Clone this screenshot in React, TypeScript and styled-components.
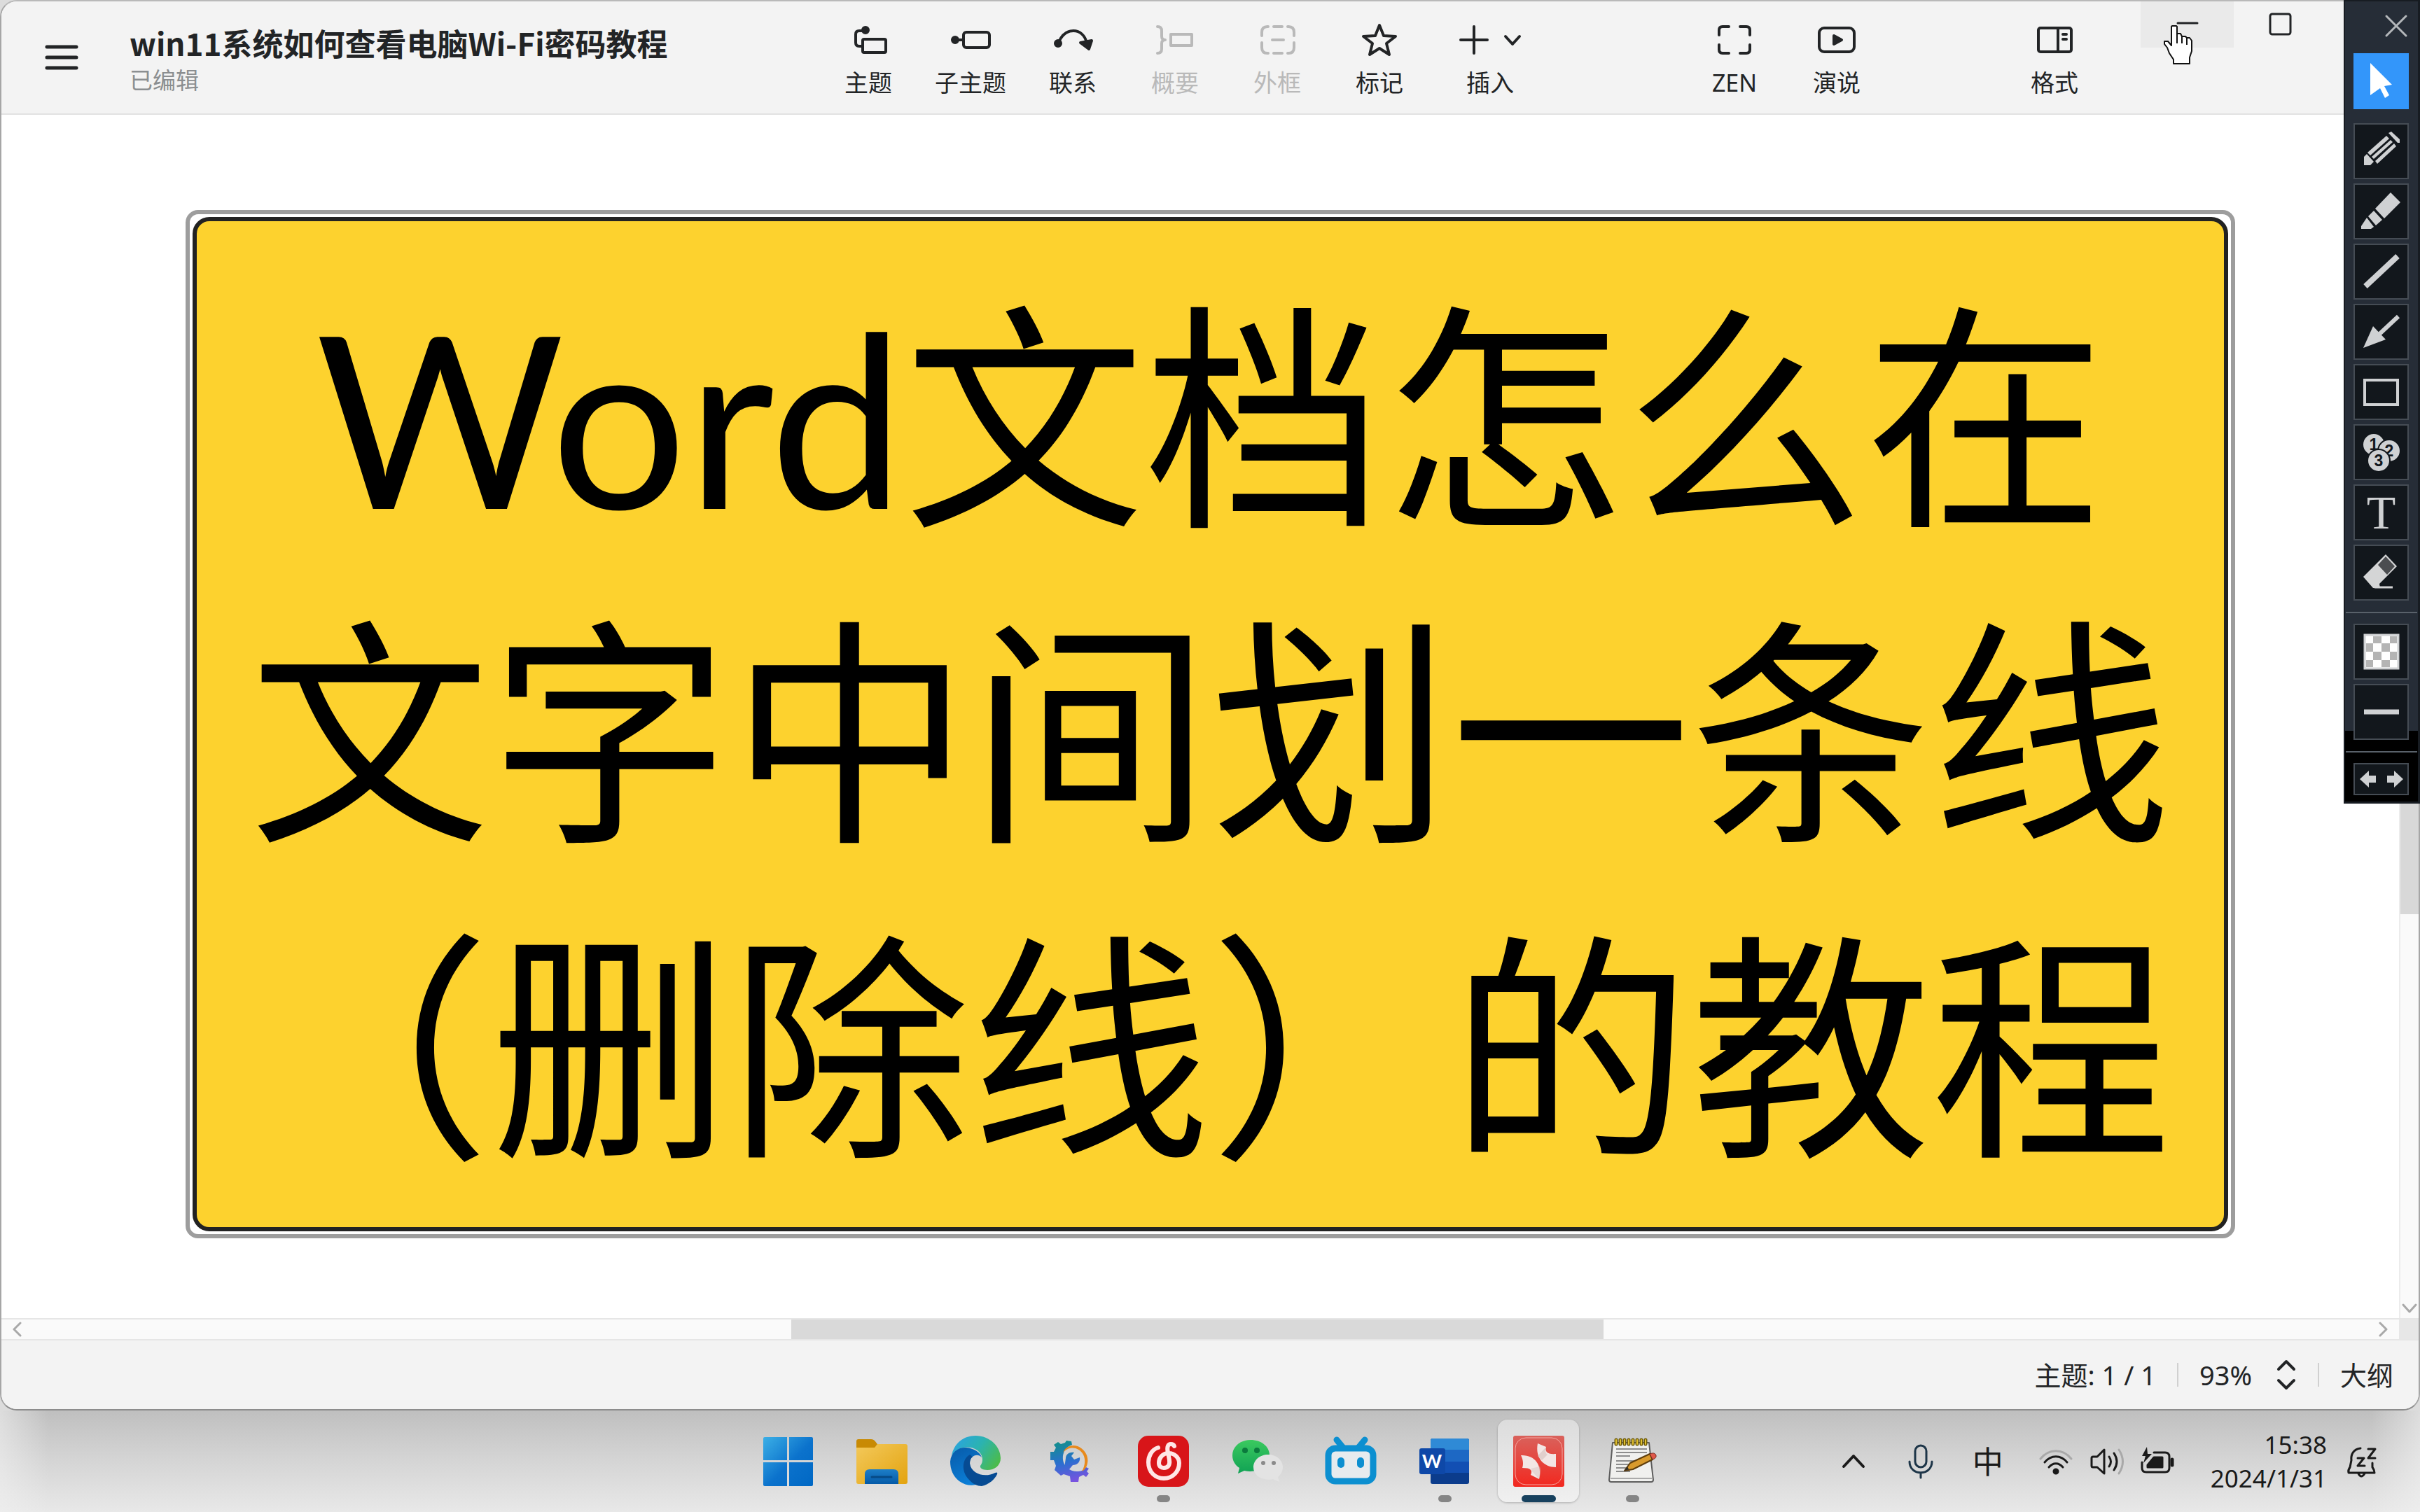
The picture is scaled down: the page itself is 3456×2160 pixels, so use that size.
import React from "react";
import styled, { createGlobalStyle, css } from "styled-components";

const GlobalStyle = createGlobalStyle`
  *, *::before, *::after { box-sizing: border-box; }
  body {
    margin: 0;
    background: #dcdcdc;
    color: #222426;
    font-family: "Noto Sans", "Noto Sans CJK SC", sans-serif;
  }
  button {
    margin: 0;
    padding: 0;
    border: 0;
    background: none;
    color: inherit;
    font: inherit;
  }
  svg { display: block; flex: none; }
`;

const Desktop = styled.div`
  position: relative;
  display: flex;
  flex-direction: column;
  min-height: 100vh;
`;

const AppWindow = styled.main`
  flex: 1;
  display: flex;
  flex-direction: column;
  overflow: hidden;
  border: 2px solid #a6a6a6;
  border-top-color: #b9b9b9;
  border-bottom-color: #8c8c8c;
  border-radius: 24px;
  background: #fff;
`;

/* ---------- header ---------- */

const Header = styled.header`
  display: flex;
  height: 162px;
  margin-right: -2px;
  border-bottom: 2px solid #e2e2e2;
  background: #f3f3f3;
`;

const TitleArea = styled.div`
  flex: 1;
  display: flex;
  padding-left: 56px;
`;

const MenuButton = styled.button`
  align-self: flex-start;
  margin: 50px 67px 0 0;
`;

const TitleText = styled.div`
  padding-top: 29px;
`;

const DocTitle = styled.h1`
  margin: 0;
  font-family: "Noto Sans CJK SC", sans-serif;
  font-size: 44px;
  line-height: 60px;
  font-weight: 700;
  white-space: nowrap;
`;

const DocState = styled.p`
  margin: 0;
  font-size: 33px;
  line-height: 48px;
  color: #8b8e90;
`;

const ToolGroup = styled.nav<{ $after?: number }>`
  display: flex;
  margin-right: ${(p) => p.$after ?? 0}px;
`;

const Tool = styled.button<{ $wide?: boolean }>`
  display: flex;
  flex-direction: column;
  align-items: center;
  gap: 7px;
  width: ${(p) => (p.$wide ? 170 : 146)}px;
  padding-top: 25px;
  font-size: 34px;
  line-height: 48px;
  &:disabled { color: #b9b9b9; }
`;

const CaptionButton = styled.button<{ $hover?: boolean }>`
  display: flex;
  justify-content: center;
  align-items: center;
  width: 133px;
  height: 66px;
  background: ${(p) => (p.$hover ? "#eaeaea" : "transparent")};
`;

const HandPointer = styled.svg`
  position: absolute;
  top: 34px;
  right: 324px;
`;

/* ---------- canvas ---------- */

const CanvasRow = styled.section`
  flex: 1;
  display: flex;
`;

const Canvas = styled.div`
  flex: 1;
  display: flex;
  align-items: center;
  padding: 22px 234px 0 263px;
`;

const TopicFrame = styled.div`
  flex: 1;
  padding: 4px;
  border: 6px solid #9d9d9d;
  border-radius: 18px;
`;

const Topic = styled.h2`
  margin: 0;
  padding: 53px 0 34px;
  border: 6px solid #222;
  border-radius: 24px;
  background: #fdd22e;
  color: #000;
  font-family: Lato, "Noto Sans CJK SC", sans-serif;
  font-size: 343px;
  line-height: 450px;
  font-weight: 400;
  text-align: center;
`;

const TopicLine = styled.span`
  display: block;
  white-space: nowrap;
`;

const VScroll = styled.div`
  display: flex;
  flex-direction: column;
  width: 28px;
  border-left: 2px solid #ececec;
  background: #fafafa;
`;

const VThumb = styled.div`
  height: 1142px;
  background: #d8d8d8;
`;

const ScrollArrow = styled.button<{ $push?: "down" | "right" }>`
  display: flex;
  justify-content: center;
  align-items: center;
  width: ${(p) => (p.$push === "down" ? 26 : 46)}px;
  height: 28px;
  ${(p) => p.$push === "down" && css`margin-top: auto;`}
  ${(p) => p.$push === "right" && css`margin-left: auto;`}
`;

const HScrollRow = styled.div`
  display: flex;
  height: 32px;
  border-top: 2px solid #e6e6e6;
  border-bottom: 2px solid #e6e6e6;
  background: #fafafa;
`;

const HTrack = styled.div`
  flex: 1;
  display: flex;
`;

const HSpace = styled.div`
  width: 1082px;
`;

const HThumb = styled.div`
  width: 1160px;
  background: #d9d9d9;
`;

const ScrollCorner = styled.div`
  width: 28px;
  background: #e7e7e7;
`;

const StatusBar = styled.footer`
  display: flex;
  justify-content: flex-end;
  align-items: center;
  height: 98px;
  padding-right: 36px;
  background: #f3f3f3;
  font-size: 38px;
  line-height: 56px;
  white-space: nowrap;
`;

const Separator = styled.span`
  width: 2px;
  height: 34px;
  margin: 0 30px;
  background: #d0d0d0;
`;

const Zoom = styled.span`
  display: flex;
  align-items: center;
  gap: 34px;
`;

const ZoomSteps = styled.span`
  display: grid;
  gap: 10px;
`;

/* ---------- annotation palette ---------- */

const Palette = styled.aside`
  position: absolute;
  top: 0;
  right: 0;
  width: 109px;
  padding: 18px 14px 9px 12px;
  border: solid #171c22;
  border-width: 2px 3px 3px 2px;
  background: linear-gradient(#262d37 1042px, #000 1042px);
  color: #cfd1d3;
`;

const PaletteClose = styled.button`
  display: block;
  margin: 0 0 22px auto;
`;

const PaletteStack = styled.div`
  display: grid;
  gap: 6px;
`;

const PaletteButton = styled.button<{ $active?: boolean; $short?: boolean }>`
  display: flex;
  justify-content: center;
  align-items: center;
  width: 79px;
  height: ${(p) => (p.$short ? 46 : 80)}px;
  margin-bottom: ${(p) => (p.$active ? 14 : 0)}px;
  border: 2px solid ${(p) => (p.$active ? "#3396fa" : "#454c54")};
  background: ${(p) => (p.$active ? "#3396fa" : "#12171c")};
`;

const LetterMark = styled.span`
  font-family: "Liberation Serif", serif;
  font-size: 68px;
  line-height: 76px;
`;

const PaletteRule = styled.hr`
  margin: 16px -13px 15px -11px;
  border: 0;
  border-top: 2px solid #59616a;
`;

/* ---------- taskbar ---------- */

const Taskbar = styled.footer`
  display: grid;
  grid-template-columns: 1fr auto 1fr;
  height: 145px;
  background:
    linear-gradient(90deg, rgba(240, 240, 240, 0.6), transparent 2%, transparent 98%, rgba(240, 240, 240, 0.6)),
    linear-gradient(#bfbfbf, #d3d3d3 45%, #e8e8e8);
`;

const Apps = styled.nav`
  grid-column: 2;
  display: flex;
  gap: 18px;
  padding: 13px 9px 0;
`;

const AppButton = styled.button<{ $active?: boolean }>`
  display: flex;
  flex-direction: column;
  align-items: center;
  justify-content: space-between;
  width: 116px;
  height: 118px;
  padding-top: 22px;
  border-radius: 14px;
  ${(p) => p.$active && css`
    background: linear-gradient(#dcdcdc, #f0f0f0);
    box-shadow: 0 1px 3px rgba(0, 0, 0, 0.25);
  `}
`;

const RunMark = styled.span<{ $active?: boolean }>`
  width: ${(p) => (p.$active ? 49 : 19)}px;
  height: 10px;
  border-radius: 5px;
  background: ${(p) => (p.$active ? "#17415e" : "#858585")};
`;

const Tray = styled.div`
  display: flex;
  justify-content: flex-end;
  align-items: center;
  padding-right: 55px;
  color: #1a1a1a;
`;

const TrayButton = styled.button<{ $narrow?: boolean; $lead?: boolean }>`
  display: flex;
  justify-content: center;
  width: ${(p) => (p.$narrow ? 73 : 96)}px;
  margin-left: ${(p) => (p.$lead ? 13 : 0)}px;
  font-size: 44px;
  line-height: 56px;
`;

const Clock = styled.time`
  margin: 0 22px 0 38px;
  font-size: 35px;
  line-height: 48px;
  text-align: right;
`;

/* ---------- small drawing helpers ---------- */

const Line = ({ w = 60, h = 60, sw = 4, children }: { w?: number; h?: number; sw?: number; children: React.ReactNode }) => (
  <svg width={w} height={h} viewBox={`0 0 ${w} ${h}`} fill="none" stroke="currentColor" strokeWidth={sw} strokeLinecap="round" strokeLinejoin="round" aria-hidden="true">
    {children}
  </svg>
);

const editTools = [
  { label: "主题", icon: <><circle cx="26" cy="16" r="4" fill="currentColor" /><path d="M26 17H17q-5 0-5 5V34q0 5 5 5H22" /><rect x="22" y="29" width="33" height="19" rx="2" /></> },
  { label: "子主题", icon: <><circle cx="8" cy="30" r="4" fill="currentColor" /><path d="M8 30H20" /><rect x="20" y="19" width="37" height="22" rx="4" /></> },
  { label: "联系", icon: <><circle cx="9" cy="35" r="4" fill="currentColor" /><path d="M10 33C15 22 22 17 31 17s16 6 19 17" /><path d="M41 34L57 31L53 43Z" fill="currentColor" /></> },
  { label: "概要", off: true, icon: <><path d="M5 11q6 0 6 6v8q0 5 5 5q-5 0-5 5v8q0 6-6 6" /><rect x="24" y="22" width="30" height="16" /></> },
  { label: "外框", off: true, icon: <><path d="M8 24V19q0-8 8-8h1M25 11H37M45 11h1q8 0 8 8v5M54 34v7q0 8-8 8h-1M37 49H25M17 49h-1q-8 0-8-8v-7M23 30H39" /></> },
  { label: "标记", icon: <path d="M30 9L36 24L53 25L40 35L44 51L30 42L16 51L20 35L7 25L24 24Z" /> },
];

const paletteTools = [
  { label: "铅笔", icon: <g fill="currentColor"><path d="M5 38L9 34L19 45L14 50H5Z" /><path d="M10 32L37 8L41 12L14 36Z" /><path d="M16 38L43 14L46 17L19 41Z" /><path d="M21 44L48 19L51 23L24 48Z" /><path d="M40 4L44 2L56 13V18H53Z" /></g> },
  { label: "荧光笔", icon: <g fill="currentColor"><path d="M21 26L43 3L57 17L34 40Z" /><path d="M11 37L19 29L31 42L22 50Z" /><path d="M1 51L9 39L19 52L15 55H1Z" /></g> },
  { label: "直线", icon: <path d="M7 51L53 8" stroke="currentColor" strokeWidth="8" /> },
  { label: "箭头", icon: <><path d="M24 36L54 8" stroke="currentColor" strokeWidth="6" /><path d="M4 53L18 22L36 41Z" fill="currentColor" /></> },
  { label: "矩形", icon: <rect x="6" y="13" width="47" height="35" fill="none" stroke="currentColor" strokeWidth="4" /> },
];

const Coin = ({ x, y, n }: { x: number; y: number; n: string }) => (
  <>
    <circle cx={x} cy={y} r="16" fill="#cfd1d3" stroke="#12171c" strokeWidth="2" />
    <text x={x} y={y + 8} textAnchor="middle" fontFamily="Liberation Sans, sans-serif" fontWeight="700" fontSize="23" fill="#12171c">{n}</text>
  </>
);

const Art = ({ children }: { children: React.ReactNode }) => (
  <svg width="60" height="60" viewBox="0 0 60 60" aria-hidden="true">{children}</svg>
);

const AppArt = ({ children }: { children: React.ReactNode }) => (
  <svg width="74" height="74" viewBox="0 0 74 74" fill="none" aria-hidden="true">{children}</svg>
);

const apps = [
  {
    label: "开始",
    icon: <>
      <defs><linearGradient id="win" gradientUnits="userSpaceOnUse" x1="2" y1="2" x2="72" y2="72"><stop stopColor="#3cb0e6" /><stop offset="0.55" stopColor="#0b72cc" /><stop offset="1" stopColor="#0068c4" /></linearGradient></defs>
      <path fill="url(#win)" d="M4 3H36V36H2V5q0-2 2-2ZM39 3H71q2 0 2 2V36H39ZM2 39H36V73H4q-2 0-2-2ZM39 39H73V71q0 2-2 2H39Z" />
    </>,
  },
  {
    label: "文件资源管理器",
    icon: <>
      <defs>
        <linearGradient id="fold" x1="0" y1="0" x2="1" y2="1"><stop stopColor="#f3c95b" /><stop offset="1" stopColor="#e3a30f" /></linearGradient>
        <linearGradient id="foldBlue" x1="0" y1="0" x2="0" y2="1"><stop stopColor="#1d7ec7" /><stop offset="1" stopColor="#045aa8" /></linearGradient>
      </defs>
      <path fill="url(#fold)" d="M1 16H28L31 13H71q3 0 3 3V67q0 3-3 3H4q-3 0-3-3Z" />
      <path fill="#c88a04" d="M1 9q0-3 3-3H22q3 0 5 2l4 5l-4 5H1Z" />
      <path fill="url(#foldBlue)" d="M13 70V56q0-7 7-7H54q7 0 7 7V70Z" />
      <path stroke="#064a86" strokeWidth="3" strokeLinecap="round" d="M23 60H51" />
    </>,
  },
  {
    label: "Edge",
    icon: <>
      <defs>
        <linearGradient id="edgeTop" x1="0" y1="0.2" x2="1" y2="0.7"><stop stopColor="#2aa3e0" /><stop offset="0.5" stopColor="#2bb3b0" /><stop offset="1" stopColor="#4cbb4a" /></linearGradient>
        <linearGradient id="edgeMid" x1="0" y1="0" x2="0.5" y2="1"><stop stopColor="#075aa8" /><stop offset="1" stopColor="#0b7fd8" /></linearGradient>
      </defs>
      <path fill="url(#edgeTop)" d="M3 30C6 12 20 1 37 1C58 1 73 17 73 33C73 44 64 50 54 50C47 50 43 47 44 44C49 38 48 28 40 22C28 14 10 17 3 30Z" />
      <path fill="url(#edgeMid)" d="M1 38C2 24 13 17 24 18C35 19 44 25 46 32C40 25 29 30 29 40C29 52 40 60 52 58C46 73 28 76 14 66C5 59 1 49 1 38Z" />
      <path fill="#064b93" d="M29 28C17 35 17 53 28 64C33 70 40 73 46 73C56 71 65 63 68 56C69 53 67 53 65 54C50 62 31 55 29 41C29 37 30 33 33 31Z" />
    </>,
  },
  {
    label: "电脑管家",
    icon: <>
      <defs><linearGradient id="gear" gradientUnits="userSpaceOnUse" x1="30" y1="8" x2="44" y2="67"><stop stopColor="#128f8d" /><stop offset="0.5" stopColor="#2b6fcf" /><stop offset="1" stopColor="#7a52e0" /></linearGradient></defs>
      <path fill="url(#gear)" d="M10 24H15L18 18L15 14L21 10L25 13L31 11L33 8L40 9L41 14C32 17 27 25 28 35C29 45 38 52 48 52C53 52 57 51 61 46L65 48L62 52L65 55L61 60L57 57L51 60L50 67H39L38 59L29 56L25 58L16 50L18 44L15 36H10Z" />
      <path fill="#e88a1c" d="M28 25C32 16 41 13 49 16C59 20 65 30 63 40C62 46 59 50 55 52C59 45 61 36 57 28C51 17 37 15 28 25Z" />
      <path fill="url(#gear)" d="M32 33C32 28 37 24 44 25L40 30L44 35L52 32C53 38 49 43 42 43L37 49L30 47Z" />
    </>,
  },
  {
    label: "网易云音乐", run: true,
    icon: <>
      <rect x="1" y="1" width="73" height="73" rx="15" fill="#d81519" />
      <path stroke="#ffe6e6" strokeWidth="6" strokeLinecap="round" d="M30 18C20 21 16 31 16 39C16 53 26 62 38 62C51 62 60 52 60 40C60 32 53 26 45 26C36 26 31 33 31 40C31 45 34 47 38 47C44 47 47 43 46 36L44 25C42 17 44 13 48 13Q52 13 53 16" />
    </>,
  },
  {
    label: "微信",
    icon: <>
      <defs><linearGradient id="wx" x1="0" y1="0" x2="0" y2="1"><stop stopColor="#3bc95f" /><stop offset="1" stopColor="#10a254" /></linearGradient></defs>
      <path fill="url(#wx)" d="M28 7C13 7 2 17 2 29C2 37 6 43 12 47L10 55L19 51C36 55 55 46 55 29C55 16 43 7 28 7Z" />
      <circle cx="20" cy="22" r="4" fill="#0b7a3d" /><circle cx="37" cy="22" r="4" fill="#0b7a3d" />
      <path fill="#e3e3e3" d="M53 28C41 28 32 36 32 46C32 58 44 66 60 63L69 67L67 60C71 57 74 51 74 46C74 36 65 28 53 28Z" />
      <circle cx="46" cy="40" r="3" fill="#8b8b8b" /><circle cx="61" cy="40" r="3" fill="#8b8b8b" />
    </>,
  },
  {
    label: "哔哩哔哩",
    icon: <>
      <path stroke="#0c8fd0" strokeWidth="9" strokeLinecap="round" d="M17 7L26 18M57 7L48 18" />
      <rect x="5" y="19" width="64" height="47" rx="10" fill="#e6ebee" stroke="#0c8fd0" strokeWidth="9" />
      <rect x="18" y="32" width="10" height="15" rx="5" fill="#0c8fd0" /><rect x="46" y="32" width="10" height="15" rx="5" fill="#0c8fd0" />
    </>,
  },
  {
    label: "Word", run: true,
    icon: <>
      <rect x="17" y="5" width="55" height="65" rx="3" fill="#0b3c8c" />
      <path fill="#2f8ad6" d="M20 5H69q3 0 3 3V21H17V8q0-3 3-3Z" /><path fill="#1d68c4" d="M17 21H72V38H17Z" /><path fill="#124fb3" d="M17 38H72V54H17Z" />
      <rect x="1" y="19" width="37" height="37" rx="3" fill="#0e48a8" />
      <text x="19" y="47" textAnchor="middle" fontFamily="Lato, sans-serif" fontWeight="700" fontSize="27" fill="#fff">W</text>
    </>,
  },
  {
    label: "Xmind", run: true, active: true,
    icon: <>
      <defs><linearGradient id="xm" x1="0" y1="0" x2="0" y2="1"><stop stopColor="#d9625c" /><stop offset="1" stopColor="#f2281f" /></linearGradient></defs>
      <rect x="1" y="1" width="73" height="73" rx="3" fill="url(#xm)" />
      <rect x="4" y="4" width="67" height="67" rx="15" stroke="#f5a8a2" strokeWidth="1" />
      <path fill="#f3e6e4" d="M36 12L48 17C46 24 50 28 62 27V46C45 46 32 33 36 12Z" />
      <path fill="#f3e6e4" d="M12 29C31 28 43 42 38 63L26 57C29 50 26 47 14 47C16 41 15 35 12 29Z" />
      <path fill="#d9c4c2" d="M36 30L48 17C46 22 47 26 50 28L42 36Z" opacity="0.7" />
      <path fill="#d9c4c2" d="M39 45C41 50 40 56 38 63L28 52C28 50 27 49 26 48Z" opacity="0.5" />
    </>,
  },
  {
    label: "记事本", run: true,
    icon: <>
      <path fill="#f0f0ee" stroke="#5d5d5d" strokeWidth="2" strokeLinejoin="round" d="M9 11H61L67 64Q67 67 64 67H7Q4 67 4 64Z" />
      <path stroke="#aaa" strokeWidth="2" d="M6 62H65" />
      <path stroke="#8d8d8d" strokeWidth="2" d="M14 20H58M14 25H58M14 30H34M14 37H52M14 42H44M14 47H38M14 52H34" />
      <path stroke="#6e5b08" strokeWidth="5" strokeLinecap="round" d="M14 7V13M20 7V13M26 7V13M32 7V13M38 7V13M44 7V13M50 7V13M56 7V13" />
      <path stroke="#e0bf2f" strokeWidth="2" strokeLinecap="round" d="M14 7V13M20 7V13M26 7V13M32 7V13M38 7V13M44 7V13M50 7V13M56 7V13" />
      <path fill="#d99a2c" stroke="#5e3d0c" strokeWidth="2" strokeLinejoin="round" d="M26 51L34 40L62 27L66 35L38 49Z" />
      <path fill="#e0584a" stroke="#7c2a20" strokeWidth="1" d="M62 27Q69 24 71 29Q72 33 66 35Z" />
      <path fill="#2b2b2b" d="M26 51L30 45L32 49Z" />
    </>,
  },
];

export default function App() {
  return (
    <Desktop>
      <GlobalStyle />
      <AppWindow>
        <Header>
          <TitleArea>
            <MenuButton aria-label="菜单">
              <Line sw={5}><path d="M9 15H51M9 30H51M9 45H51" /></Line>
            </MenuButton>
            <TitleText>
              <DocTitle>win11系统如何查看电脑Wi-Fi密码教程</DocTitle>
              <DocState>已编辑</DocState>
            </TitleText>
          </TitleArea>
          <ToolGroup $after={191} aria-label="编辑">
            {editTools.map((t) => (
              <Tool key={t.label} disabled={t.off}>
                <Line>{t.icon}</Line>
                {t.label}
              </Tool>
            ))}
            <Tool $wide>
              <Line w={90}><path d="M22 11V49M3 30H41M67 25L77 36L87 25" /></Line>
              插入
            </Tool>
          </ToolGroup>
          <ToolGroup $after={165} aria-label="视图">
            <Tool>
              <Line><path d="M8 23V16q0-5 5-5H22M38 11H47q5 0 5 5V23M52 37V44q0 5-5 5H38M22 49H13q-5 0-5-5V37" /></Line>
              ZEN
            </Tool>
            <Tool>
              <Line><rect x="5" y="13" width="50" height="34" rx="7" /><path d="M26 24L37 30L26 36Z" fill="currentColor" /></Line>
              演说
            </Tool>
          </ToolGroup>
          <ToolGroup $after={50} aria-label="格式">
            <Tool>
              <Line><rect x="7" y="13" width="47" height="34" rx="3" /><path d="M35 13V47M42 22H47M42 29H47" /></Line>
              格式
            </Tool>
          </ToolGroup>
          <CaptionButton $hover aria-label="最小化">
            <Line w={32} h={32} sw={3}><path d="M2 14H30" /></Line>
          </CaptionButton>
          <CaptionButton aria-label="最大化">
            <Line w={34} h={34} sw={3}><rect x="2" y="2" width="29" height="29" rx="3" /></Line>
          </CaptionButton>
          <CaptionButton aria-label="关闭">
            <Line w={32} h={32} sw={3}><path d="M3 3L29 29M29 3L3 29" /></Line>
          </CaptionButton>
        </Header>

        <CanvasRow>
          <Canvas>
            <TopicFrame>
              <Topic>
                <TopicLine>Word文档怎么在</TopicLine>
                <TopicLine>文字中间划一条线</TopicLine>
                <TopicLine>（删除线）的教程</TopicLine>
              </Topic>
            </TopicFrame>
          </Canvas>
          <VScroll>
            <VThumb />
            <ScrollArrow $push="down" aria-label="向下滚动">
              <Line w={22} h={22} sw={3}><path d="M2 6L11 16L20 6" stroke="#a9a9a9" /></Line>
            </ScrollArrow>
          </VScroll>
        </CanvasRow>
        <HScrollRow>
          <HTrack>
            <ScrollArrow aria-label="向左滚动">
              <Line w={22} h={22} sw={3}><path d="M15 2L6 11L15 20" stroke="#a9a9a9" /></Line>
            </ScrollArrow>
            <HSpace />
            <HThumb />
            <ScrollArrow $push="right" aria-label="向右滚动">
              <Line w={22} h={22} sw={3}><path d="M7 2L16 11L7 20" stroke="#a9a9a9" /></Line>
            </ScrollArrow>
          </HTrack>
          <ScrollCorner />
        </HScrollRow>
        <StatusBar>
          <span>主题: 1 / 1</span>
          <Separator />
          <Zoom>
            93%
            <ZoomSteps>
              <button aria-label="放大"><Line w={30} h={17}><path d="M4 14L15 3L26 14" /></Line></button>
              <button aria-label="缩小"><Line w={30} h={17}><path d="M4 3L15 14L26 3" /></Line></button>
            </ZoomSteps>
          </Zoom>
          <Separator />
          <button>大纲</button>
        </StatusBar>
      </AppWindow>

      <Taskbar>
        <Apps aria-label="任务栏">
          {apps.map((a) => (
            <AppButton key={a.label} $active={a.active} aria-label={a.label}>
              <AppArt>{a.icon}</AppArt>
              {a.run && <RunMark $active={a.active} />}
            </AppButton>
          ))}
        </Apps>
        <Tray>
          <TrayButton aria-label="显示隐藏的图标"><Line w={40} h={40} sw={4}><path d="M6 27L20 12L34 27" /></Line></TrayButton>
          <TrayButton aria-label="麦克风">
            <Line w={40} h={52} sw={3}><g stroke="#1d3548"><rect x="12" y="3" width="16" height="31" rx="8" /><path d="M4 26C4 47 36 47 36 26M20 42V49" /></g></Line>
          </TrayButton>
          <TrayButton>中</TrayButton>
          <TrayButton $narrow $lead aria-label="网络">
            <Line w={50} h={44} sw={3}><path d="M3 18C15 3 35 3 47 18" stroke="#a9a9a9" /><path d="M9 23C18 12 32 12 41 23M15 30C21 23 29 23 35 30" /><circle cx="25" cy="36" r="3" fill="currentColor" /></Line>
          </TrayButton>
          <TrayButton $narrow aria-label="音量">
            <Line w={50} h={44} sw={3}><path d="M3 17q0-2 2-2H11L21 5V39L11 30H5q-2 0-2-2ZM28 15q5 7 0 14M35 10q8 12 0 24" /><path d="M42 5q11 17 0 34" stroke="#a9a9a9" /></Line>
          </TrayButton>
          <TrayButton $narrow aria-label="电池">
            <Line w={52} h={44} sw={3}><path d="M20 9H36q6 0 6 6V31q0 6-6 6H9q-6 0-6-6V23" /><path d="M46 19V27" strokeWidth="5" /><path d="M20 16H32V30H11V27Z" fill="currentColor" /><path d="M10 1L3 14H8L5 24L17 11H11Z" fill="currentColor" stroke="none" /></Line>
          </TrayButton>
          <Clock dateTime="2024-01-31T15:38">15:38<br />2024/1/31</Clock>
          <button aria-label="通知">
            <Line w={56} h={52} sw={3}><path d="M26 7C16 8 12 16 13 24L11 34Q8 38 9 42H46Q46 38 43 34V28M23 43Q27 51 32 43M22 21H31L22 32H32M37 8H47L37 21H47" /></Line>
          </button>
        </Tray>
      </Taskbar>

      <Palette aria-label="标注工具">
        <PaletteClose aria-label="关闭标注"><Line w={34} h={34} sw={3}><path d="M3 3L31 31M31 3L3 31" stroke="#b4b7ba" /></Line></PaletteClose>
        <PaletteStack>
          <PaletteButton $active aria-label="选择">
            <Art><path fill="#fff" d="M14 4L45 35L34 37L41 50L35 54L28 40L14 50Z" /></Art>
          </PaletteButton>
          {paletteTools.map((t) => (
            <PaletteButton key={t.label} aria-label={t.label}><Art>{t.icon}</Art></PaletteButton>
          ))}
          <PaletteButton aria-label="编号">
            <Art><Coin x={19} y={19} n="1" /><Coin x={41} y={28} n="2" /><Coin x={26} y={42} n="3" /></Art>
          </PaletteButton>
          <PaletteButton aria-label="文字">
            <LetterMark>T</LetterMark>
          </PaletteButton>
          <PaletteButton aria-label="橡皮">
            <Art><path d="M4 36L36 4L52 21L27 46L28 52H18Z" fill="#d4d5d6" /><path d="M25 19L36 7L49 21L38 33Z" fill="#4b4d50" /><path d="M20 51H46" stroke="#d4d5d6" strokeWidth="3" /></Art>
          </PaletteButton>
        </PaletteStack>
        <PaletteRule />
        <PaletteStack>
          <PaletteButton aria-label="透明度">
            <Art>
              <rect x="6" y="6" width="48" height="48" fill="#fff" stroke="#cfd1d3" strokeWidth="3" />
              <path fill="#b4b4b4" d="M18 8H30V18H18ZM42 8H52V18H42ZM8 18H18V30H8ZM30 18H42V30H30ZM18 30H30V42H18ZM42 30H52V42H42ZM8 42H18V52H8ZM30 42H42V52H30Z" />
            </Art>
          </PaletteButton>
          <PaletteButton aria-label="线宽"><Art><path d="M5 30H55" stroke="currentColor" strokeWidth="7" /></Art></PaletteButton>
        </PaletteStack>
        <PaletteRule />
        <PaletteButton $short aria-label="展开">
          <svg width="64" height="30" viewBox="0 0 64 30" fill="currentColor" aria-hidden="true">
            <path d="M1 15L14 3V10H24V20H14V27Z" /><path d="M63 15L50 3V10H40V20H50V27Z" />
          </svg>
        </PaletteButton>
      </Palette>

      <HandPointer width="44" height="60" viewBox="0 0 44 60" fill="#fff" stroke="#111" strokeWidth="2" strokeLinejoin="round" aria-hidden="true">
        <path d="M16 57V51L10 42L7 34L3 29V25H8L13 31V4L14 3H20L21 4V14H26L28 18H33L35 20H39L42 24V39L39 48V57Z" />
        <path d="M21 14V28M28 18V28M35 20V30" />
      </HandPointer>
    </Desktop>
  );
}
